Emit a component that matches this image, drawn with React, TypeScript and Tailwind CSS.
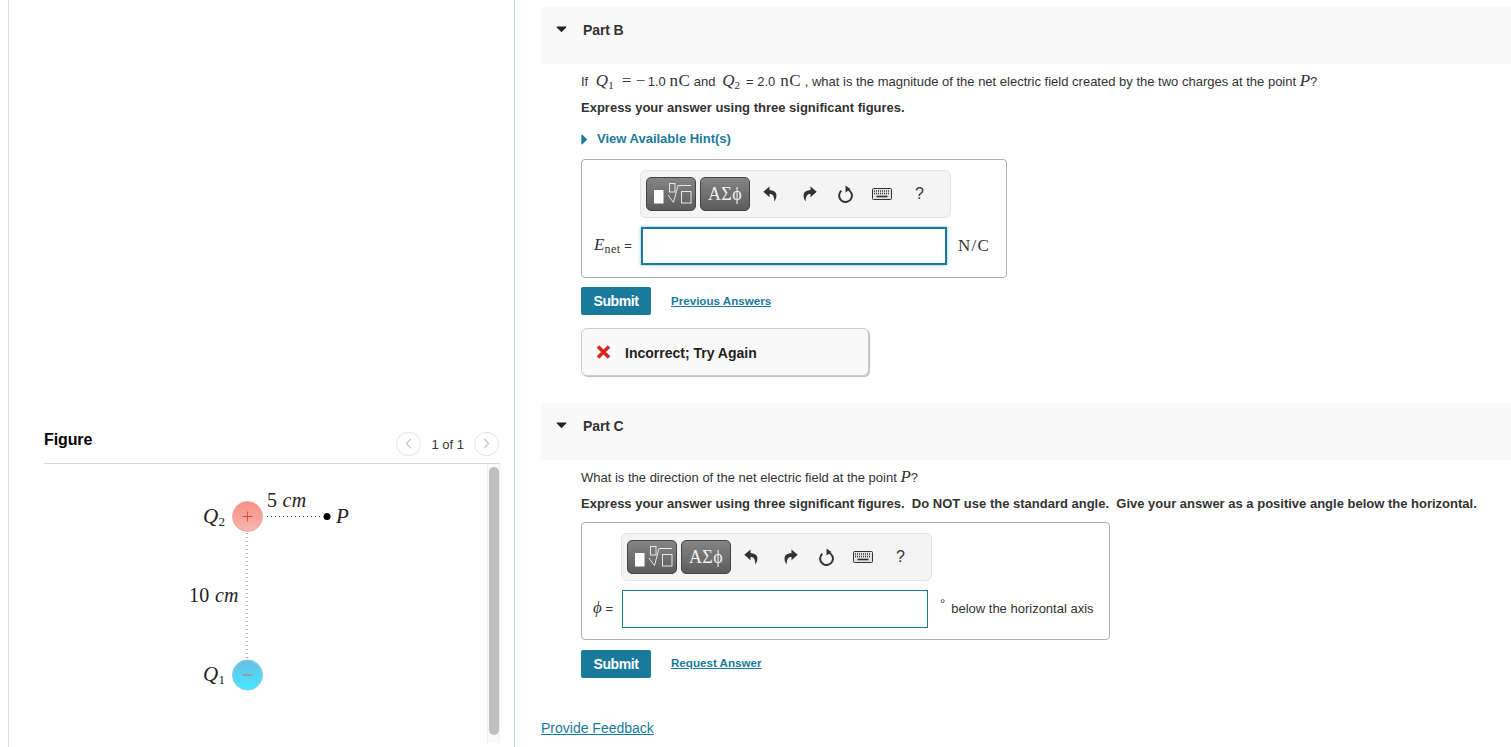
import React from 'react';
import { ChevronLeft, ChevronRight } from 'lucide-react';
import { FaCaretDown, FaCaretRight } from 'react-icons/fa';

const sans = "font-['Liberation_Sans',Arial,sans-serif]";
const serif = "font-['Liberation_Serif','Times_New_Roman',serif]";

function Var({ children, sub }: { children: React.ReactNode; sub?: string }) {
  return (
    <span className={`${serif} text-[17px] leading-none italic text-[#333]`}>
      {children}
      {sub && <sub className="text-[11px] not-italic leading-none">{sub}</sub>}
    </span>
  );
}

function Unit({ children }: { children: React.ReactNode }) {
  return <span className={`${serif} text-[17px] leading-none tracking-[0.5px]`}>{children}</span>;
}

function Figure() {
  return (
    <svg width="443" height="279" viewBox="0 0 443 279" className="block" fontFamily="'Liberation Serif', serif" fill="#222">
      <defs>
        <linearGradient id="red" x1="0" y1="0" x2="0" y2="1">
          <stop offset="0" stopColor="#f88f86" />
          <stop offset="1" stopColor="#f7b7b0" />
        </linearGradient>
        <linearGradient id="blue" x1="0" y1="0" x2="0" y2="1">
          <stop offset="0" stopColor="#69bfe6" />
          <stop offset="1" stopColor="#45e9fb" />
        </linearGradient>
      </defs>
      {/* dotted distances */}
      <line x1="203" y1="69" x2="203" y2="196" stroke="#666" strokeWidth="1" strokeDasharray="1 3" />
      <line x1="223" y1="52.5" x2="278" y2="52.5" stroke="#666" strokeWidth="1" strokeDasharray="1 3" />
      {/* charges */}
      <circle cx="203.5" cy="52.5" r="15" fill="url(#red)" stroke="#f5a69e" />
      <path d="M198.5 52.5h10M203.5 47.5v10" stroke="#f0473c" strokeWidth="1" />
      <circle cx="203.5" cy="211" r="15" fill="url(#blue)" stroke="#8fc4ea" />
      <path d="M198.5 211h10" stroke="#e0605a" strokeWidth="1" />
      <circle cx="283" cy="52.5" r="3.5" fill="#000" />
      <text x="159" y="59" fontSize="21" fontStyle="italic">Q</text>
      <text x="174.5" y="62" fontSize="13">2</text>
      <text x="159" y="217" fontSize="21" fontStyle="italic">Q</text>
      <text x="174.5" y="220" fontSize="13">1</text>
      <text x="223" y="43" fontSize="20" letterSpacing="0.3">5 <tspan fontStyle="italic">cm</tspan></text>
      <text x="145" y="138" fontSize="20" letterSpacing="0.3">10 <tspan fontStyle="italic">cm</tspan></text>
      <text x="292" y="59" fontSize="21" fontStyle="italic">P</text>
    </svg>
  );
}

function LeftPanel() {
  return (
    <div className="w-[515px] shrink-0 h-full border-r border-[#c3cfdf] pl-[8px]">
      <div className="h-full border-l border-[#dddddd] pl-[35px] pr-[14px] pt-[430px]">
        <div className="flex items-center justify-between h-[34px] border-b border-[#d9d9d9] pb-[13px]">
          <span className="text-[16px] font-bold text-black tracking-[-0.1px]">Figure</span>
          <div className="flex items-center gap-[10px] mt-[9px] mr-[1px] text-[13px] text-[#333]">
            <span className="w-[25px] h-[24px] -mt-[2px] rounded-full border border-[#e5e5e5] flex items-center justify-center text-[#c4c4c4]">
              <ChevronLeft size={17} strokeWidth={1.5} />
            </span>
            <span>1 of 1</span>
            <span className="w-[25px] h-[24px] -mt-[2px] rounded-full border border-[#e5e5e5] flex items-center justify-center text-[#c4c4c4]">
              <ChevronRight size={17} strokeWidth={1.5} />
            </span>
          </div>
        </div>
        <div className="flex h-[279px]">
          <div className="flex-1 min-w-0">
            <Figure />
          </div>
          <div className="w-[13px] h-full border-x border-[#f0f0f0] bg-[#fafafa] flex justify-center pt-[3px]">
            <div className="w-[10px] h-[268px] rounded-full bg-[#bfbfbf]" />
          </div>
        </div>
      </div>
    </div>
  );
}

function UndoIcon({ flip }: { flip?: boolean }) {
  return (
    <svg width="15" height="16" viewBox="0 0 15 16" className={flip ? '-scale-x-100' : ''}>
      <path d="M6.5 0.5L0.3 5.8l6.2 5.4V7.9c3 0 4.8 1.6 4.9 7.6 3.6-5.6 2.8-11.2-4.9-11.6z" fill="#333" />
    </svg>
  );
}

function ReloadIcon() {
  return (
    <svg width="17" height="18" viewBox="0 0 17 18">
      <path d="M10 4.4A6.4 6.4 0 1 1 4.3 5.8" fill="none" stroke="#333" strokeWidth="2" />
      <path d="M8.5 0.4l5 3.7-5 3.3z" fill="#333" />
    </svg>
  );
}

function KeyboardIcon() {
  return (
    <svg width="20" height="12" viewBox="0 0 20 12">
      <rect x="0.5" y="0.5" width="19" height="11" rx="1" fill="#e4e4e4" stroke="#333" />
      <path d="M2 3h16M2 5.5h16" stroke="#333" strokeWidth="1.3" strokeDasharray="1 1" />
      <path d="M4.5 8.5h11" stroke="#333" strokeWidth="1.6" />
    </svg>
  );
}

function TemplateIcon() {
  return (
    <svg width="48" height="32" viewBox="0 0 48 32">
      <rect x="7" y="12" width="9.5" height="13.5" fill="#fff" />
      <rect x="22.5" y="5.5" width="5.5" height="8.5" fill="none" stroke="#e5e5e5" />
      <path d="M21 17l5.5 7.5L31 7.5h13" fill="none" stroke="#e5e5e5" />
      <rect x="34.5" y="13.5" width="9.5" height="11.5" fill="none" stroke="#e5e5e5" />
    </svg>
  );
}

function Toolbar() {
  const btn = 'h-[34px] rounded-[5px] border border-[#444] bg-gradient-to-b from-[#858585] to-[#5c5c5c] flex items-center justify-center';
  return (
    <div className="w-[311px] h-[48px] rounded-[6px] border border-[#e3e3e3] bg-[#f4f4f4] flex items-center pl-[5px] text-[#333]">
      <div className={`${btn} w-[50px]`}>
        <TemplateIcon />
      </div>
      <div className={`${btn} w-[50px] ml-[4px] ${serif} text-[18px] tracking-[0.3px] text-[#eee]`}>ΑΣϕ</div>
      <div className="ml-[13px] w-[15px] flex justify-center"><UndoIcon /></div>
      <div className="ml-[24px] w-[15px] flex justify-center"><UndoIcon flip /></div>
      <div className="ml-[20px] w-[17px] flex justify-center"><ReloadIcon /></div>
      <div className="ml-[18px] w-[20px] flex justify-center"><KeyboardIcon /></div>
      <div className="ml-[23px] text-[16px] leading-none">?</div>
    </div>
  );
}

function PartHeader({ label }: { label: string }) {
  return (
    <div className="h-[57px] bg-[#f9f9f9] flex items-start pt-[13px] pl-[12px]">
      <FaCaretDown size={17} className="text-[#222]" />
      <span className="ml-[13px] text-[14px] leading-[20px] font-bold text-[#333] tracking-[-0.1px]">{label}</span>
    </div>
  );
}

function SubmitRow({ link, linkClass = '' }: { link: string; linkClass?: string }) {
  return (
    <div className="flex items-center h-[28px]">
      <button className="w-[70px] h-[28px] rounded-[2px] bg-[#1a7a9c] text-white text-[14px] font-bold tracking-[-0.4px]">Submit</button>
      <a className={`ml-[20px] text-[11.6px] font-bold text-[#1a7a9c] underline ${linkClass}`}>{link}</a>
    </div>
  );
}

export default function App() {
  return (
    <div className={`${sans} w-[1511px] h-[747px] overflow-hidden bg-white flex text-[13px] text-[#333]`}>
      <LeftPanel />
      <div className="flex-1 min-w-0 pl-[26px] pt-[7px]">
        <PartHeader label="Part B" />

        <div className="pl-[40px]">
          <p className="mt-[8px] h-[20px] leading-[20px] flex items-baseline whitespace-pre">
            If <span className="ml-[4px]"><Var sub="1">Q</Var></span>
            <span className="ml-[8px]"><Unit>=</Unit></span>
            <span className="ml-[4px] w-[12px]"><Unit>−</Unit></span>
            1.0 <Unit>nC</Unit> and{' '}
            <span className="ml-[3px]"><Var sub="2">Q</Var></span>
            <span className="ml-[6px]">= 2.0</span>
            <span className="ml-[5px]"><Unit>nC</Unit></span> , what is the magnitude of the net electric field created by the two charges at the point <Var>P</Var>?
          </p>
          <p className="mt-[6px] h-[20px] leading-[20px] font-bold">Express your answer using three significant figures.</p>
          <div className="mt-[11px] h-[20px] flex items-center text-[#1a7a9c] font-bold">
            <FaCaretRight size={17} className="ml-[-5px]" />
            <span className="ml-[4px]">View Available Hint(s)</span>
          </div>

          <div className="mt-[10px] w-[426px] h-[119px] rounded-[4px] border border-[#b0b0b0] pt-[10px]">
            <div className="ml-[58px]"><Toolbar /></div>
            <div className="mt-[9px] flex items-center">
              <span className="w-[59px] pl-[12px] whitespace-nowrap">
                <Var>E</Var><sub className={`${serif} text-[12px] leading-none tracking-[0.5px]`}>net</sub> =
              </span>
              <div className="w-[306px] h-[38px] border-2 border-[#1a7a9c] shadow-[0_0_3px_#1a7a9c88] bg-white" />
              <span className={`${serif} ml-[11px] text-[17px] tracking-[1.3px]`}>N/C</span>
            </div>
          </div>

          <div className="mt-[9px]"><SubmitRow link="Previous Answers" /></div>

          <div className="mt-[13px] w-[288px] h-[48px] rounded-[6px] border border-[#cccccc] bg-[#f9f9f9] shadow-[1px_1px_1px_#bbb] flex items-center pl-[14px]">
            <svg width="15" height="14" viewBox="0 0 15 14">
              <path d="M2 1.5l11 11M13 1.5l-11 11" stroke="#d62b25" strokeWidth="3.6" />
            </svg>
            <span className="ml-[14px] mt-[2px] text-[14px] font-bold text-[#222]">Incorrect; Try Again</span>
          </div>
        </div>

        <div className="mt-[27px]"><PartHeader label="Part C" /></div>

        <div className="pl-[40px]">
          <p className="mt-[8px] h-[20px] leading-[20px]">What is the direction of the net electric field at the point <Var>P</Var>?</p>
          <p className="mt-[6px] h-[20px] leading-[20px] font-bold whitespace-pre">Express your answer using three significant figures.  Do NOT use the standard angle.  Give your answer as a positive angle below the horizontal.</p>

          <div className="mt-[8px] w-[529px] h-[118px] rounded-[4px] border border-[#b0b0b0] pt-[10px]">
            <div className="ml-[39px]"><Toolbar /></div>
            <div className="mt-[9px] flex items-center">
              <span className="w-[40px] pl-[11px] whitespace-nowrap"><Var>ϕ</Var> =</span>
              <div className="w-[306px] h-[38px] border border-[#1a7a9c] bg-white" />
              <span className="ml-[12px] self-start mt-[7px] text-[13px] leading-[14px]">°</span>
              <span className="ml-[6px]">below the horizontal axis</span>
            </div>
          </div>

          <div className="mt-[10px]"><SubmitRow link="Request Answer" linkClass="mb-[2px]" /></div>
        </div>

        <a className="block mt-[41px] text-[14px] leading-[18px] text-[#1a7a9c] underline">Provide Feedback</a>
      </div>
    </div>
  );
}
